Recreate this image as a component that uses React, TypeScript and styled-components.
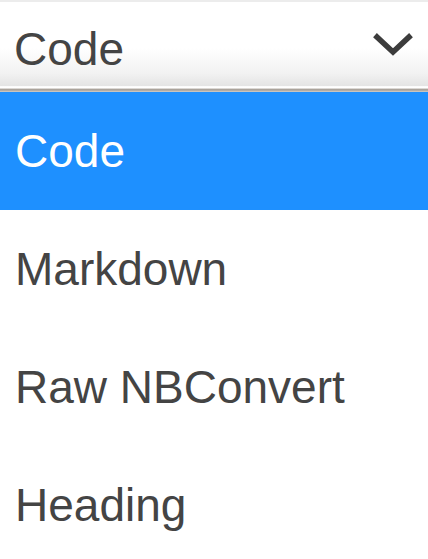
import React from "react";
import styled, { createGlobalStyle } from "styled-components";

const Global = createGlobalStyle`
  html, body { margin: 0; padding: 0; background: #ffffff; }
  body { font-family: "Liberation Sans", Arial, sans-serif; }
`;

const Wrapper = styled.div`
  width: 428px;
  height: 559px;
  overflow: hidden;
  background: #ffffff;
  display: flex;
  flex-direction: column;
`;

const SelectBox = styled.div`
  height: 86px;
  box-sizing: border-box;
  border-top: 2px solid #ececec;
  background: linear-gradient(to bottom, #ffffff 0%, #ffffff 55%, #f2f2f2 85%, #e4e4e4 100%);
  display: flex;
  align-items: center;
  justify-content: space-between;
  padding: 0 15px 0 14px;
  flex-shrink: 0;
`;

const SelectText = styled.span`
  font-size: 46px;
  color: #444444;
  line-height: 1;
  margin-top: 9px;
`;

const Chevron = styled.svg`
  width: 40px;
  height: 26px;
  margin-top: 2px;
  filter: blur(0.6px);
`;

const Divider = styled.div`
  height: 6px;
  flex-shrink: 0;
  background: linear-gradient(
    to bottom,
    #f8f8f8 0px,
    #ffffff 1px,
    #ffffff 2px,
    #b8b2ab 3px,
    #9c948c 4px,
    #c9c4be 5px,
    #c9c4be 6px
  );
`;

const List = styled.ul`
  list-style: none;
  margin: 0;
  padding: 0;
  display: flex;
  flex-direction: column;
`;

const Option = styled.li<{ $selected?: boolean }>`
  height: 118px;
  flex-shrink: 0;
  display: flex;
  align-items: center;
  padding-left: 15px;
  font-size: 46px;
  background: ${(p) => (p.$selected ? "#1e90ff" : "#ffffff")};
  color: ${(p) => (p.$selected ? "#ffffff" : "#444444")};
`;

const options = ["Code", "Markdown", "Raw NBConvert", "Heading"];

export default function App() {
  return (
    <Wrapper>
      <Global />
      <SelectBox>
        <SelectText>Code</SelectText>
        <Chevron viewBox="0 0 40 26">
          <polyline
            points="4,5 20,20 36,5"
            fill="none"
            stroke="#3c3c3c"
            strokeWidth="5.5"
            strokeLinecap="square"
            strokeLinejoin="miter"
          />
        </Chevron>
      </SelectBox>
      <Divider />
      <List>
        {options.map((o, i) => (
          <Option key={o} $selected={i === 0}>
            {o}
          </Option>
        ))}
      </List>
    </Wrapper>
  );
}
